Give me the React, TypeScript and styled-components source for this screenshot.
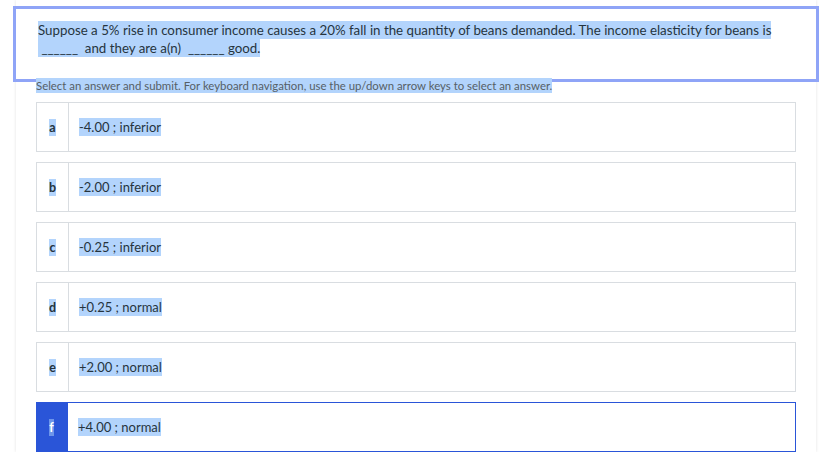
import React from "react";
import styled, { createGlobalStyle } from "styled-components";

const Global = createGlobalStyle`
  html, body { margin: 0; padding: 0; background: #ffffff; }
  body { font-family: "Lato", "Open Sans", sans-serif; color: #2d3b45; overflow: hidden; }
`;

const Panel = styled.div`
  margin: 0 7px 0 16px;
  min-height: 452px;
  background: #ffffff;
  box-shadow: 0 0 3px rgba(0, 0, 0, 0.12);
  padding: 9px 20px 0 20px;
  box-sizing: border-box;
`;

const Question = styled.div`
  margin: 0 -20px;
  height: 70px;
  box-sizing: border-box;
  outline: 3px solid #8fa4f7;
  padding: 13px 22px 0 22px;
  font-size: 13.3px;
  line-height: 17.5px;
  color: #26343e;
`;

const Sel = styled.span<{ $inverse?: boolean }>`
  background: ${(p) => (p.$inverse ? "#6d95ea" : "#b3d4fc")};
  padding: 1px 0;
`;

const Instructions = styled.div`
  position: relative;
  margin: 0 0 0 0;
  font-size: 11.4px;
  line-height: 13px;
  color: #565f66;
`;

const Options = styled.div`
  margin-top: 10px;
  display: flex;
  flex-direction: column;
  gap: 10px;
`;

const Option = styled.div<{ $selected?: boolean }>`
  display: flex;
  height: 50px;
  box-sizing: border-box;
  border: 1px solid ${(p) => (p.$selected ? "#2a55d8" : "#d9dde1")};
  background: #fff;
`;

const Letter = styled.div<{ $selected?: boolean }>`
  width: 31px;
  flex: none;
  display: flex;
  align-items: center;
  justify-content: center;
  font-weight: 700;
  font-size: 12.5px;
  color: ${(p) => (p.$selected ? "#ffffff" : "#26343e")};
  background: ${(p) => (p.$selected ? "#2a55d8" : "transparent")};
  border-right: 1px solid ${(p) => (p.$selected ? "#2a55d8" : "#d9dde1")};
  margin: ${(p) => (p.$selected ? "-1px 0 -1px -1px" : "0")};
`;

const Label = styled.div`
  display: flex;
  align-items: center;
  padding-left: 10px;
  font-size: 13px;
  color: #26343e;
`;

const options = [
  ["a", "-4.00 ; inferior"],
  ["b", "-2.00 ; inferior"],
  ["c", "-0.25 ; inferior"],
  ["d", "+0.25 ; normal"],
  ["e", "+2.00 ; normal"],
  ["f", "+4.00 ; normal"],
];

export default function App() {
  return (
    <>
      <Global />
      <Panel>
        <Question>
          <Sel>
            Suppose a 5% rise in consumer income causes a 20% fall in the quantity of beans demanded. The income
            elasticity for beans is
          </Sel>
          <br />
          <Sel>&nbsp;______&nbsp; and they are a(n) &nbsp;______ good.</Sel>
        </Question>
        <Instructions>
          <Sel>Select an answer and submit. For keyboard navigation, use the up/down arrow keys to select an answer.</Sel>
        </Instructions>
        <Options>
          {options.map(([l, t]) => {
            const s = l === "f";
            return (
              <Option key={l} $selected={s}>
                <Letter $selected={s}>
                  <Sel $inverse={s}>{l}</Sel>
                </Letter>
                <Label>
                  <Sel>{t}</Sel>
                </Label>
              </Option>
            );
          })}
        </Options>
      </Panel>
    </>
  );
}
